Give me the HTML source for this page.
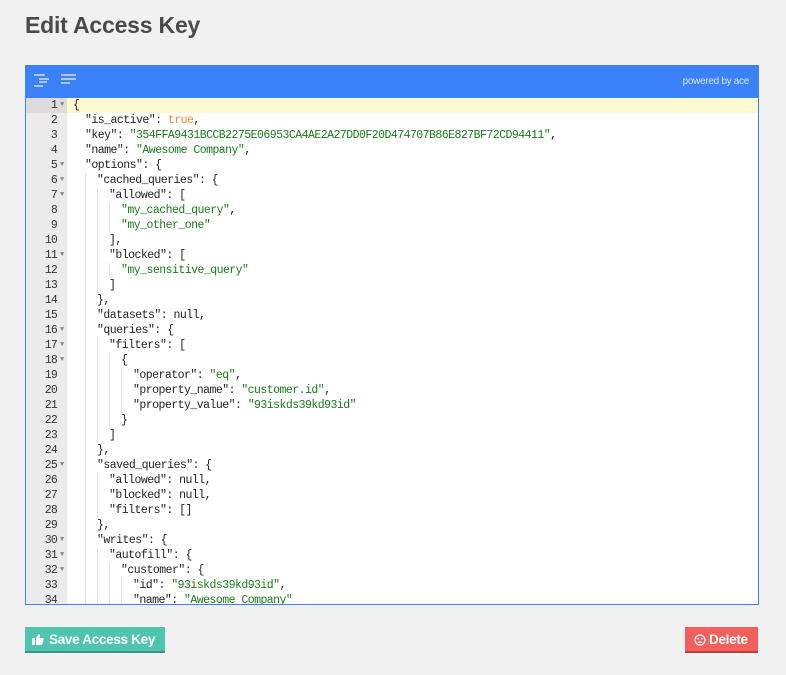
<!DOCTYPE html>
<html><head><meta charset="utf-8"><style>
*{margin:0;padding:0;box-sizing:border-box}
body{width:786px;height:675px;background:#f1f1f1;font-family:"Liberation Sans",sans-serif;position:relative;overflow:hidden}
h1{position:absolute;left:25px;top:12px;font-size:23px;font-weight:bold;color:#4a4a4a;letter-spacing:-0.2px}
.ed{position:absolute;left:25px;top:65px;width:734px;height:540px;border:1px solid #3b82f8;background:#fff;overflow:hidden}
.tb{position:absolute;left:0;top:0;width:100%;height:32px;background:#3b82f8}
.tb i{position:absolute;height:2px;background:#aac8fb}
.pw{position:absolute;right:9px;top:10px;font-size:10px;color:#d4e3fd;letter-spacing:-0.3px}
.gut{position:absolute;left:0;top:32px;width:41px;bottom:0;background:#ebebeb}
.lines{position:absolute;left:0;top:32px;right:0}
.ln{height:15px;position:relative;font-family:"Liberation Mono",monospace;font-size:11.5px;line-height:15px;letter-spacing:-0.53px;white-space:pre;color:#222}
.ln .n{position:absolute;left:0;width:31px;text-align:right;color:#333;letter-spacing:-0.8px}
.ln .f{position:absolute;left:34px;top:0;font-size:7px;color:#888;letter-spacing:0}
.ln .c{position:absolute;left:47px;top:0}
.ln.a{background:#fdf9d0}
.ln.a .n,.ln.a .f{background:#dcdcdc}
.ln.a .gb{position:absolute;left:0;top:0;width:41px;height:15px;background:#dcdcdc}
.u{display:inline-block;width:12px;height:15px;vertical-align:top}
.u+.u{border-left:1px solid #e2e2e2}
.s{color:#1a7a1a}.t{color:#f0862c}
.btn{position:absolute;top:627px;height:26px;color:#fff;font-weight:bold;font-size:13.5px;line-height:25px;letter-spacing:-0.3px}
.save{left:25px;width:140px;background:#4fc5b1;border-bottom:2px solid #3a9583;padding-left:24px}
.del{left:685px;width:73px;background:#f25f5c;border-bottom:2px solid #b8403d;padding-left:24px}
</style></head><body>
<h1>Edit Access Key</h1>
<div class="ed">
<div class="tb">
<i style="left:8px;top:8px;width:11px"></i><i style="left:13px;top:12px;width:10px"></i><i style="left:13px;top:15px;width:8px"></i><i style="left:8px;top:19px;width:9px"></i>
<i style="left:35px;top:8px;width:15px"></i><i style="left:35px;top:12px;width:15px"></i><i style="left:35px;top:16px;width:9px"></i>
<div class="pw">powered by ace</div>
</div>
<div class="gut"></div>
<div class="lines">
<div class="ln a"><span class="gb"></span><span class="n">1</span><span class="f">▼</span><span class="c">{</span></div>
<div class="ln"><span class="n">2</span><span class="c"><span class="u"></span>"is_active": <span class="t">true</span>,</span></div>
<div class="ln"><span class="n">3</span><span class="c"><span class="u"></span>"key": <span class="s">"354FFA9431BCCB2275E06953CA4AE2A27DD0F20D474707B86E827BF72CD94411"</span>,</span></div>
<div class="ln"><span class="n">4</span><span class="c"><span class="u"></span>"name": <span class="s">"Awesome Company"</span>,</span></div>
<div class="ln"><span class="n">5</span><span class="f">▼</span><span class="c"><span class="u"></span>"options": {</span></div>
<div class="ln"><span class="n">6</span><span class="f">▼</span><span class="c"><span class="u"></span><span class="u"></span>"cached_queries": {</span></div>
<div class="ln"><span class="n">7</span><span class="f">▼</span><span class="c"><span class="u"></span><span class="u"></span><span class="u"></span>"allowed": [</span></div>
<div class="ln"><span class="n">8</span><span class="c"><span class="u"></span><span class="u"></span><span class="u"></span><span class="u"></span><span class="s">"my_cached_query"</span>,</span></div>
<div class="ln"><span class="n">9</span><span class="c"><span class="u"></span><span class="u"></span><span class="u"></span><span class="u"></span><span class="s">"my_other_one"</span></span></div>
<div class="ln"><span class="n">10</span><span class="c"><span class="u"></span><span class="u"></span><span class="u"></span>],</span></div>
<div class="ln"><span class="n">11</span><span class="f">▼</span><span class="c"><span class="u"></span><span class="u"></span><span class="u"></span>"blocked": [</span></div>
<div class="ln"><span class="n">12</span><span class="c"><span class="u"></span><span class="u"></span><span class="u"></span><span class="u"></span><span class="s">"my_sensitive_query"</span></span></div>
<div class="ln"><span class="n">13</span><span class="c"><span class="u"></span><span class="u"></span><span class="u"></span>]</span></div>
<div class="ln"><span class="n">14</span><span class="c"><span class="u"></span><span class="u"></span>},</span></div>
<div class="ln"><span class="n">15</span><span class="c"><span class="u"></span><span class="u"></span>"datasets": null,</span></div>
<div class="ln"><span class="n">16</span><span class="f">▼</span><span class="c"><span class="u"></span><span class="u"></span>"queries": {</span></div>
<div class="ln"><span class="n">17</span><span class="f">▼</span><span class="c"><span class="u"></span><span class="u"></span><span class="u"></span>"filters": [</span></div>
<div class="ln"><span class="n">18</span><span class="f">▼</span><span class="c"><span class="u"></span><span class="u"></span><span class="u"></span><span class="u"></span>{</span></div>
<div class="ln"><span class="n">19</span><span class="c"><span class="u"></span><span class="u"></span><span class="u"></span><span class="u"></span><span class="u"></span>"operator": <span class="s">"eq"</span>,</span></div>
<div class="ln"><span class="n">20</span><span class="c"><span class="u"></span><span class="u"></span><span class="u"></span><span class="u"></span><span class="u"></span>"property_name": <span class="s">"customer.id"</span>,</span></div>
<div class="ln"><span class="n">21</span><span class="c"><span class="u"></span><span class="u"></span><span class="u"></span><span class="u"></span><span class="u"></span>"property_value": <span class="s">"93iskds39kd93id"</span></span></div>
<div class="ln"><span class="n">22</span><span class="c"><span class="u"></span><span class="u"></span><span class="u"></span><span class="u"></span>}</span></div>
<div class="ln"><span class="n">23</span><span class="c"><span class="u"></span><span class="u"></span><span class="u"></span>]</span></div>
<div class="ln"><span class="n">24</span><span class="c"><span class="u"></span><span class="u"></span>},</span></div>
<div class="ln"><span class="n">25</span><span class="f">▼</span><span class="c"><span class="u"></span><span class="u"></span>"saved_queries": {</span></div>
<div class="ln"><span class="n">26</span><span class="c"><span class="u"></span><span class="u"></span><span class="u"></span>"allowed": null,</span></div>
<div class="ln"><span class="n">27</span><span class="c"><span class="u"></span><span class="u"></span><span class="u"></span>"blocked": null,</span></div>
<div class="ln"><span class="n">28</span><span class="c"><span class="u"></span><span class="u"></span><span class="u"></span>"filters": []</span></div>
<div class="ln"><span class="n">29</span><span class="c"><span class="u"></span><span class="u"></span>},</span></div>
<div class="ln"><span class="n">30</span><span class="f">▼</span><span class="c"><span class="u"></span><span class="u"></span>"writes": {</span></div>
<div class="ln"><span class="n">31</span><span class="f">▼</span><span class="c"><span class="u"></span><span class="u"></span><span class="u"></span>"autofill": {</span></div>
<div class="ln"><span class="n">32</span><span class="f">▼</span><span class="c"><span class="u"></span><span class="u"></span><span class="u"></span><span class="u"></span>"customer": {</span></div>
<div class="ln"><span class="n">33</span><span class="c"><span class="u"></span><span class="u"></span><span class="u"></span><span class="u"></span><span class="u"></span>"id": <span class="s">"93iskds39kd93id"</span>,</span></div>
<div class="ln"><span class="n">34</span><span class="c"><span class="u"></span><span class="u"></span><span class="u"></span><span class="u"></span><span class="u"></span>"name": <span class="s">"Awesome Company"</span></span></div>
</div>
</div>
<div class="btn save"><svg style="position:absolute;left:7px;top:7px" width="12" height="11" viewBox="0 0 12 11"><rect x="0" y="4" width="3" height="7" fill="#fff"/><path d="M4 4 L6.5 0.5 Q8 0 8 1.5 L7.5 4 L11 4 Q12 4.5 11.5 6 L10.5 10 Q10 11 9 11 L4 11 Z" fill="#fff"/></svg>Save Access Key</div>
<div class="btn del"><svg style="position:absolute;left:9px;top:7px" width="12" height="12" viewBox="0 0 12 12"><circle cx="6" cy="6" r="5" fill="none" stroke="#fff" stroke-width="1.2"/><circle cx="4.2" cy="4.6" r=".9" fill="#fff"/><circle cx="7.8" cy="4.6" r=".9" fill="#fff"/><path d="M3.8 8.8 Q6 6.8 8.2 8.8" fill="none" stroke="#fff" stroke-width="1.1"/></svg>Delete</div>
</body></html>
